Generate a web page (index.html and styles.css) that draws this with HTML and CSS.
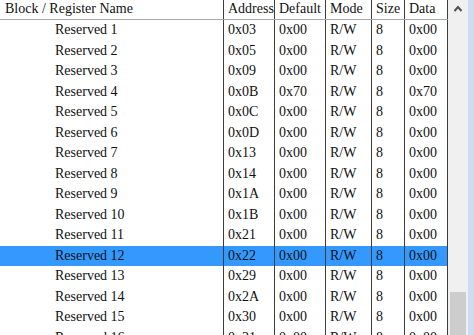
FILE: index.html
```html
<!DOCTYPE html>
<html lang="en">
<head>
  <meta charset="UTF-8">
  <title>Register Table</title>
  <link rel="stylesheet" href="styles.css">
</head>
<body>
  <div class="frame">
    <div class="grid">
      <div class="row head">
        <div class="cell name">Block / Register Name</div>
        <div class="cell">Address</div>
        <div class="cell">Default</div>
        <div class="cell">Mode</div>
        <div class="cell">Size</div>
        <div class="cell">Data</div>
      </div>
      <div class="row"><div class="cell name">Reserved 1</div><div class="cell">0x03</div><div class="cell">0x00</div><div class="cell">R/W</div><div class="cell">8</div><div class="cell">0x00</div></div>
      <div class="row"><div class="cell name">Reserved 2</div><div class="cell">0x05</div><div class="cell">0x00</div><div class="cell">R/W</div><div class="cell">8</div><div class="cell">0x00</div></div>
      <div class="row"><div class="cell name">Reserved 3</div><div class="cell">0x09</div><div class="cell">0x00</div><div class="cell">R/W</div><div class="cell">8</div><div class="cell">0x00</div></div>
      <div class="row"><div class="cell name">Reserved 4</div><div class="cell">0x0B</div><div class="cell">0x70</div><div class="cell">R/W</div><div class="cell">8</div><div class="cell">0x70</div></div>
      <div class="row"><div class="cell name">Reserved 5</div><div class="cell">0x0C</div><div class="cell">0x00</div><div class="cell">R/W</div><div class="cell">8</div><div class="cell">0x00</div></div>
      <div class="row"><div class="cell name">Reserved 6</div><div class="cell">0x0D</div><div class="cell">0x00</div><div class="cell">R/W</div><div class="cell">8</div><div class="cell">0x00</div></div>
      <div class="row"><div class="cell name">Reserved 7</div><div class="cell">0x13</div><div class="cell">0x00</div><div class="cell">R/W</div><div class="cell">8</div><div class="cell">0x00</div></div>
      <div class="row"><div class="cell name">Reserved 8</div><div class="cell">0x14</div><div class="cell">0x00</div><div class="cell">R/W</div><div class="cell">8</div><div class="cell">0x00</div></div>
      <div class="row"><div class="cell name">Reserved 9</div><div class="cell">0x1A</div><div class="cell">0x00</div><div class="cell">R/W</div><div class="cell">8</div><div class="cell">0x00</div></div>
      <div class="row"><div class="cell name">Reserved 10</div><div class="cell">0x1B</div><div class="cell">0x00</div><div class="cell">R/W</div><div class="cell">8</div><div class="cell">0x00</div></div>
      <div class="row"><div class="cell name">Reserved 11</div><div class="cell">0x21</div><div class="cell">0x00</div><div class="cell">R/W</div><div class="cell">8</div><div class="cell">0x00</div></div>
      <div class="row selected"><div class="cell name">Reserved 12</div><div class="cell">0x22</div><div class="cell">0x00</div><div class="cell">R/W</div><div class="cell">8</div><div class="cell">0x00</div></div>
      <div class="row"><div class="cell name">Reserved 13</div><div class="cell">0x29</div><div class="cell">0x00</div><div class="cell">R/W</div><div class="cell">8</div><div class="cell">0x00</div></div>
      <div class="row"><div class="cell name">Reserved 14</div><div class="cell">0x2A</div><div class="cell">0x00</div><div class="cell">R/W</div><div class="cell">8</div><div class="cell">0x00</div></div>
      <div class="row"><div class="cell name">Reserved 15</div><div class="cell">0x30</div><div class="cell">0x00</div><div class="cell">R/W</div><div class="cell">8</div><div class="cell">0x00</div></div>
      <div class="row"><div class="cell name">Reserved 16</div><div class="cell">0x31</div><div class="cell">0x00</div><div class="cell">R/W</div><div class="cell">8</div><div class="cell">0x00</div></div>
    </div>
    <div class="scrollbar">
      <div class="arrow">
        <svg width="20" height="17" viewBox="0 0 20 17"><polyline points="6.5,11 10,7 13.5,11" fill="none" stroke="#505050" stroke-width="2"/></svg>
      </div>
      <div class="track"></div>
      <div class="thumb"></div>
    </div>
    <div class="edge"></div>
  </div>
</body>
</html>
```

FILE: styles.css
```css
body {
  margin: 0;
  background: #fff;
  font-family: "Liberation Serif", "Times New Roman", serif;
  font-size: 14px;
  color: #111;
  overflow: hidden;
}

.frame {
  display: flex;
  height: 335px;
  overflow: hidden;
}

.grid {
  width: 448px;
  flex: none;
}

.row {
  display: grid;
  grid-template-columns: 224px 51px 51px 46px 33px 43px;
  height: 20.5px;
}

.row.head {
  height: 20px;
  border-bottom: 1px solid #a8a8a8;
  box-sizing: border-box;
}

.row.selected {
  background: #3399ff;
}

.cell {
  border-right: 1px solid #3c3c3c;
  padding-left: 4px;
  line-height: 20px;
  white-space: nowrap;
  overflow: hidden;
}

.cell.name {
  padding-left: 55px;
}

.head .cell {
  line-height: 18px;
}

.head .cell.name {
  padding-left: 5px;
}

.scrollbar {
  width: 20px;
  flex: none;
  display: flex;
  flex-direction: column;
  background: #f0f0f0;
}

.arrow {
  height: 17px;
}

.track {
  flex: 1;
}

.thumb {
  height: 43px;
  margin: 0 2px;
  background: #cdcdcd;
}

.edge {
  flex: 1;
  background: #cfdcef;
}
```
